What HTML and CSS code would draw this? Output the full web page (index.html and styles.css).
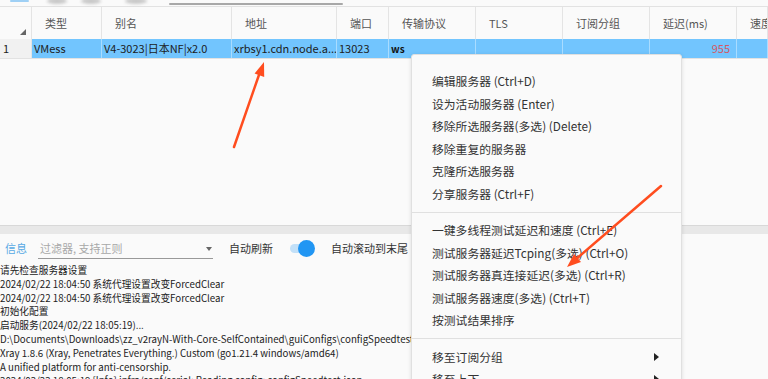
FILE: index.html
```html
<!DOCTYPE html>
<html>
<head>
<meta charset="utf-8">
<link rel="stylesheet" href="styles.css">
</head>
<body>
<div class="app">
  <div class="topstrip">
    <span class="tab-ind"></span>
    <span class="blob"></span>
    <span class="blob b2"></span>
    <span class="blob b3"></span>
    <span class="tbar"></span>
  </div>
  <div class="grid">
    <div class="hdr">
      <div class="hc first"><span class="sort"></span></div>
      <div class="hc">类型</div>
      <div class="hc">别名</div>
      <div class="hc">地址</div>
      <div class="hc">端口</div>
      <div class="hc">传输协议</div>
      <div class="hc">TLS</div>
      <div class="hc">订阅分组</div>
      <div class="hc">延迟(ms)</div>
      <div class="hc">速度</div>
    </div>
    <div class="row">
      <div class="rc first">1</div>
      <div class="rc">VMess</div>
      <div class="rc">V4-3023|日本NF|x2.0</div>
      <div class="rc">xrbsy1.cdn.node.a...</div>
      <div class="rc">13023</div>
      <div class="rc ws">ws</div>
      <div class="rc"></div>
      <div class="rc"></div>
      <div class="rc delay">955</div>
      <div class="rc"></div>
    </div>
  </div>
  <div class="empty"></div>
  <div class="splitter"></div>
  <div class="logbar">
    <span class="info">信息</span>
    <div class="filter">
      <span class="ph">过滤器, 支持正则</span>
      <span class="caret"></span>
    </div>
    <span class="lbl">自动刷新</span>
    <span class="toggle"><span class="knob"></span></span>
    <span class="lbl">自动滚动到末尾</span>
  </div>
  <div class="log">
    <div class="ln">请先检查服务器设置</div>
    <div class="ln">2024/02/22 18:04:50 系统代理设置改变ForcedClear</div>
    <div class="ln">2024/02/22 18:04:50 系统代理设置改变ForcedClear</div>
    <div class="ln">初始化配置</div>
    <div class="ln">启动服务(2024/02/22 18:05:19)...</div>
    <div class="ln">D:\Documents\Downloads\zz_v2rayN-With-Core-SelfContained\guiConfigs\configSpeedtest.json</div>
    <div class="ln">Xray 1.8.6 (Xray, Penetrates Everything.) Custom (go1.21.4 windows/amd64)</div>
    <div class="ln">A unified platform for anti-censorship.</div>
    <div class="ln">2024/02/22 18:05:19 [Info] infra/conf/serial: Reading config: configSpeedtest.json</div>
  </div>

  <div class="menu">
    <div class="mi">编辑服务器 (Ctrl+D)</div>
    <div class="mi">设为活动服务器 (Enter)</div>
    <div class="mi">移除所选服务器(多选) (Delete)</div>
    <div class="mi">移除重复的服务器</div>
    <div class="mi">克隆所选服务器</div>
    <div class="mi">分享服务器 (Ctrl+F)</div>
    <div class="sep"></div>
    <div class="mi">一键多线程测试延迟和速度 (Ctrl+E)</div>
    <div class="mi">测试服务器延迟Tcping(多选) (Ctrl+O)</div>
    <div class="mi">测试服务器真连接延迟(多选) (Ctrl+R)</div>
    <div class="mi">测试服务器速度(多选) (Ctrl+T)</div>
    <div class="mi">按测试结果排序</div>
    <div class="sep"></div>
    <div class="mi sub">移至订阅分组<span class="tri"></span></div>
    <div class="mi sub">移至上下<span class="tri"></span></div>
  </div>

  <svg class="arrows" width="768" height="379" viewBox="0 0 768 379">
    <line x1="234" y1="147" x2="260" y2="72" stroke="#ff4d1f" stroke-width="2.5" stroke-linecap="round"/>
    <polygon points="264,62 264.2,77 254.6,73.5" fill="#ff4d1f"/>
    <line x1="661" y1="186" x2="575" y2="260" stroke="#ff4d1f" stroke-width="2.5" stroke-linecap="round"/>
    <polygon points="567,267 581,262 574,254" fill="#ff4d1f"/>
  </svg>
</div>
</body>
</html>
```

FILE: styles.css
```css
* { box-sizing: border-box; }
html, body {
  margin: 0;
  padding: 0;
  width: 768px;
  height: 379px;
  overflow: hidden;
  background: #fafafa;
  font-family: "Noto Sans CJK SC", "Noto Sans", sans-serif;
  color: #222;
}
.app {
  position: relative;
  width: 768px;
  height: 379px;
  display: flex;
  flex-direction: column;
  overflow: hidden;
}
.topstrip {
  height: 7px;
  flex: none;
  border-bottom: 1px solid #e2e2e2;
  display: flex;
  align-items: flex-start;
}
.tab-ind {
  width: 19px;
  height: 2px;
  margin-left: 10px;
  background: #9fd0f5;
  border-radius: 1px;
}
.blob {
  width: 20px;
  height: 6px;
  margin-left: 18px;
  margin-top: -2px;
  border-radius: 50%;
  background: #c8c8c8;
  filter: blur(1.5px);
}
.b2 { margin-left: 14px; }
.b3 { margin-left: 24px; width: 22px; }
.tbar {
  width: 174px;
  height: 2px;
  margin-left: 22px;
  margin-top: 3px;
  background: #a8a8a8;
  border-radius: 1px;
}
.grid { flex: none; }
.hdr, .row {
  display: grid;
  grid-template-columns: 32px 70px 130px 105px 52px 87px 87px 87px 87px 1fr;
}
.hdr {
  height: 32px;
  background: #fafafa;
}
.hc {
  position: relative;
  border-right: 1px solid #e4e4e4;
  padding-left: 13px;
  font-size: 11px;
  line-height: 32px;
  color: #555;
  white-space: nowrap;
  overflow: hidden;
}
.hc.first { padding: 0; }
.sort {
  position: absolute;
  left: 20px;
  top: 22px;
  width: 0;
  height: 0;
  border-left: 6px solid transparent;
  border-bottom: 6px solid #666;
}
.row {
  height: 20px;
  border-bottom: 1px solid #e2e2e2;
  background: #72c5fe;
}
.rc {
  border-right: 1px solid #a9dcff;
  padding-left: 2px;
  font-size: 11px;
  line-height: 19px;
  color: #1c1c1c;
  white-space: nowrap;
  overflow: hidden;
}
.rc.first {
  background: #f1f1f1;
  padding-left: 3px;
  border-right: 1px solid #e4e4e4;
}
.rc.ws { font-size: 10px; font-weight: 600; color: #111; padding-left: 2px; }
.rc.delay { text-align: right; padding-right: 6px; color: #d35a66; }
.empty { flex: none; height: 166px; }
.splitter {
  flex: none;
  height: 9px;
  border-top: 1px solid #d8d8d8;
  background: #e8e8e8;
}
.logbar {
  flex: none;
  height: 29px;
  display: flex;
  align-items: center;
  font-size: 11px;
  padding-left: 5px;
  padding-bottom: 1px;
}
.info { color: #57a9e4; width: 35px; }
.filter {
  position: relative;
  width: 175px;
  height: 21px;
  margin-left: -2px;
  border-bottom: 1px solid #999;
  display: flex;
  align-items: center;
  padding-left: 2px;
}
.ph { color: #a8a8a8; }
.caret {
  position: absolute;
  right: 1px;
  top: 9px;
  width: 0;
  height: 0;
  border-left: 3.5px solid transparent;
  border-right: 3.5px solid transparent;
  border-top: 4px solid #666;
}
.lbl { color: #333; margin-left: 16px; }
.toggle {
  position: relative;
  width: 22px;
  height: 9px;
  margin-left: 17px;
  margin-right: 3px;
  border-radius: 5px;
  background: #c2e0f8;
}
.knob {
  position: absolute;
  left: 8px;
  top: -4px;
  width: 17px;
  height: 17px;
  border-radius: 50%;
  background: #2196f3;
}
.log {
  flex: none;
  padding-top: 1px;
  font-size: 9.7px;
  line-height: 13.8px;
  color: #222;
}
.ln { white-space: nowrap; }
.menu {
  position: absolute;
  left: 411px;
  top: 54px;
  width: 271px;
  height: 340px;
  background: #fafafa;
  border: 1px solid #e0e0e0;
  border-radius: 3px;
  box-shadow: 0 1px 4px rgba(0,0,0,0.12);
  padding-top: 15px;
}
.mi {
  height: 22.5px;
  line-height: 22.5px;
  padding-left: 20px;
  padding-right: 22px;
  font-size: 11.8px;
  color: #333;
  white-space: nowrap;
  display: flex;
  align-items: center;
}
.mi.sub { justify-content: space-between; }
.tri {
  width: 0;
  height: 0;
  border-top: 4px solid transparent;
  border-bottom: 4px solid transparent;
  border-left: 5px solid #222;
}
.sep {
  height: 14px;
  display: flex;
  align-items: center;
}
.sep::before {
  content: "";
  display: block;
  width: 100%;
  height: 1px;
  background: #e0e0e0;
}
.arrows {
  position: absolute;
  left: 0;
  top: 0;
  pointer-events: none;
}
```
